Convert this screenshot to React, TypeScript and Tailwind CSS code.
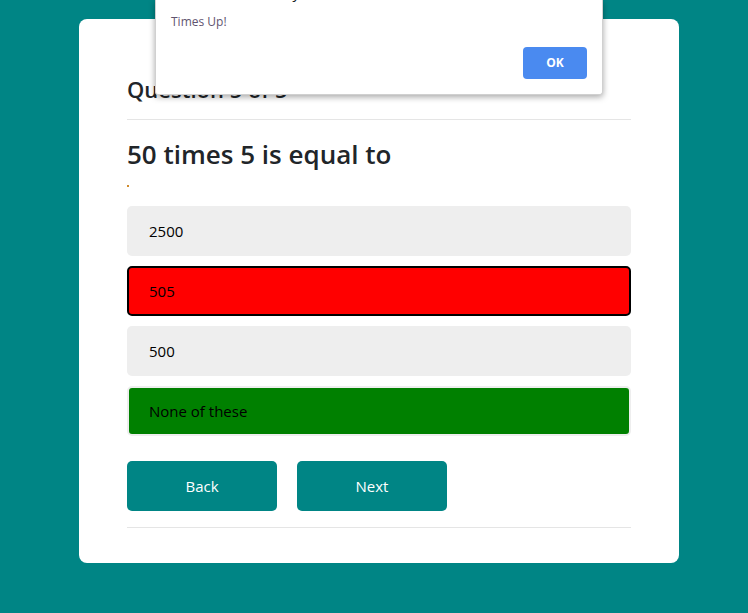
import React from "react";

const options = [
  { label: "2500", state: "idle" },
  { label: "505", state: "wrong" },
  { label: "500", state: "idle" },
  { label: "None of these", state: "right" },
];

export default function App() {
  return (
    <div
      className="relative min-h-screen bg-[#008585] pt-[19px] pb-[50px] pl-[10px] flex justify-center"
      style={{ fontFamily: '"Open Sans", "Noto Sans", sans-serif' }}
    >
      <div className="w-[600px] h-[544px] bg-white rounded-[8px] px-12 pt-[55px]">
        <h2 className="text-[22px] leading-[30px] font-semibold text-[#212529] pb-[15px] border-b border-[#e5e5e5]">
          Question 5 of 5
        </h2>
        <h1 className="mt-[17px] text-[26px] leading-[34px] font-semibold text-[#212529]">
          50 times 5 is equal to
        </h1>
        <div className="mt-[14px] h-[2px] w-[2px] bg-[#d08b2c]" />

        <div className="mt-[19px] flex flex-col gap-[10px]">
          {options.map((o) => (
            <div
              key={o.label}
              className={
                o.state === "wrong"
                  ? "h-[50px] flex items-center pl-[20px] rounded-[5px] bg-[#ff0000] border-2 border-black text-[15px] text-black"
                  : o.state === "right"
                  ? "h-[50px] flex items-center pl-[20px] rounded-[5px] bg-[#008000] border-2 border-[#eeeeee] text-[15px] text-black"
                  : "h-[50px] flex items-center pl-[22px] rounded-[5px] bg-[#eeeeee] text-[15px] text-black"
              }
            >
              {o.label}
            </div>
          ))}
        </div>

        <div className="mt-[25px] flex gap-5 pb-4 border-b border-[#e5e5e5]">
          <button className="w-[150px] h-[50px] rounded-[5px] bg-[#008585] text-white text-[15px]">
            Back
          </button>
          <button className="w-[150px] h-[50px] rounded-[5px] bg-[#008585] text-white text-[15px]">
            Next
          </button>
        </div>
      </div>

      {/* browser alert */}
      <div className="absolute left-[155px] top-0 w-[448px] h-[95px] bg-white rounded-b-[3px] shadow-[0_2px_6px_rgba(0,0,0,0.35)] border border-[#d0d0d0] border-t-0 overflow-hidden">
        <div className="absolute left-[16px] top-[-18px] text-[15px] leading-[20px] text-[#202124]">
          localhost:3000 says
        </div>
        <div className="absolute left-[15px] top-[14px] text-[12px] leading-[16px] text-[#5f5470]">
          Times Up!
        </div>
        <button className="absolute left-[367px] top-[47px] w-[64px] h-[32px] rounded-[4px] bg-[#4a8af0] text-white text-[12px] font-bold">
          OK
        </button>
      </div>
    </div>
  );
}
